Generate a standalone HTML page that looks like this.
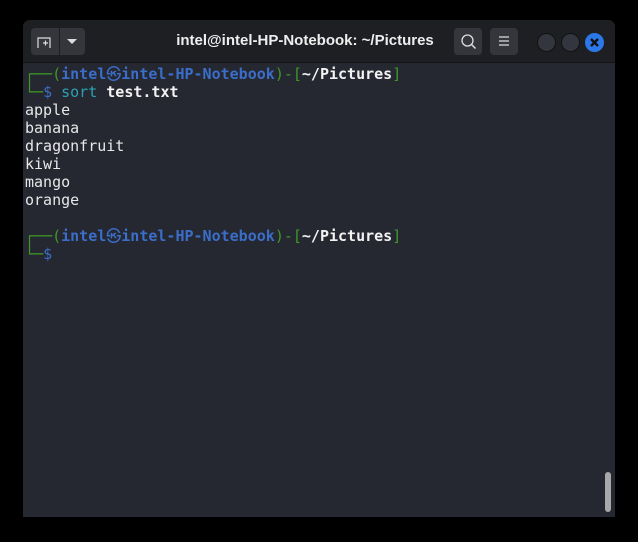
<!DOCTYPE html>
<html><head><meta charset="utf-8"><style>
html,body{margin:0;padding:0;background:#000;width:638px;height:542px;overflow:hidden}
.win{position:absolute;left:23px;top:20px;width:592px;height:497px;background:#252731;border-radius:7px 7px 0 0;overflow:hidden}
.hdr{position:absolute;left:0;top:0;width:592px;height:42px;background:#1e1f23;border-bottom:1px solid #141416}
.title{position:absolute;left:131px;width:302px;top:12px;text-align:center;font:bold 15px "Liberation Sans",sans-serif;color:#eee;white-space:nowrap}
.btn{position:absolute;top:8px;height:27px;background:#35363c;border-radius:4px}
.circ{position:absolute;top:13px;width:17px;height:17px;border-radius:50%;background:#33363e;border:1px solid #111}
.term{position:absolute;left:2px;top:45px;font:15px/18px "DejaVu Sans Mono","Noto Sans CJK JP",monospace;color:#e8e8e8;white-space:pre}
.g{color:#3e9b26}.b{color:#3a6ec8;font-weight:bold}.w{font-weight:bold;color:#f2f2f2}.c{color:#2aa3b0}.bl{color:#3a6ec8}
.sb{position:absolute;left:582px;top:452px;width:6px;height:40px;background:#a8a8aa;border-radius:3px}
</style></head><body>
<div class="win">
 <div class="hdr">
  <div class="btn" style="left:8px;width:54px"></div>
  <div style="position:absolute;left:36px;top:8px;width:1px;height:27px;background:#1e1f23"></div>
  <svg style="position:absolute;left:14px;top:14px" width="16" height="16"><path d="M1 14V4h12v10M6 9h5M8.5 6.5v5" stroke="#ddd" fill="none" stroke-width="1.2"/></svg>
  <svg style="position:absolute;left:43px;top:18px" width="12" height="8"><path d="M1 1h10L6 6z" fill="#ddd"/></svg>
  <div class="title">intel@intel-HP-Notebook: ~/Pictures</div>
  <div class="btn" style="left:431px;width:28px"></div>
  <svg style="position:absolute;left:437px;top:13px" width="18" height="18"><circle cx="7.5" cy="7.5" r="5.5" stroke="#ddd" fill="none" stroke-width="1.3"/><path d="M11.5 11.5l4 4" stroke="#ddd" stroke-width="1.5"/></svg>
  <div class="btn" style="left:467px;width:28px"></div>
  <svg style="position:absolute;left:475px;top:15px" width="12" height="12"><path d="M1 2h10M1 6h10M1 10h10" stroke="#ddd" stroke-width="1.2"/></svg>
  <div class="circ" style="left:514px"></div>
  <div class="circ" style="left:538px"></div>
  <div class="circ" style="left:562px;background:#2c78e8;border-color:#2c78e8"></div>
  <svg style="position:absolute;left:566px;top:17px" width="11" height="11"><path d="M2 2l7 7M9 2l-7 7" stroke="#111" stroke-width="2.4"/></svg>
 </div>
 <div class="term"><span class="g">┌──(</span><span class="b">intel㉿intel-HP-Notebook</span><span class="g">)-[</span><span class="w">~/Pictures</span><span class="g">]</span>
<span class="g">└─</span><span class="bl">$ </span><span class="c">sort</span> <span class="w">test.txt</span>
apple
banana
dragonfruit
kiwi
mango
orange

<span class="g">┌──(</span><span class="b">intel㉿intel-HP-Notebook</span><span class="g">)-[</span><span class="w">~/Pictures</span><span class="g">]</span>
<span class="g">└─</span><span class="bl">$ </span></div>
 <div class="sb"></div>
</div>
</body></html>
